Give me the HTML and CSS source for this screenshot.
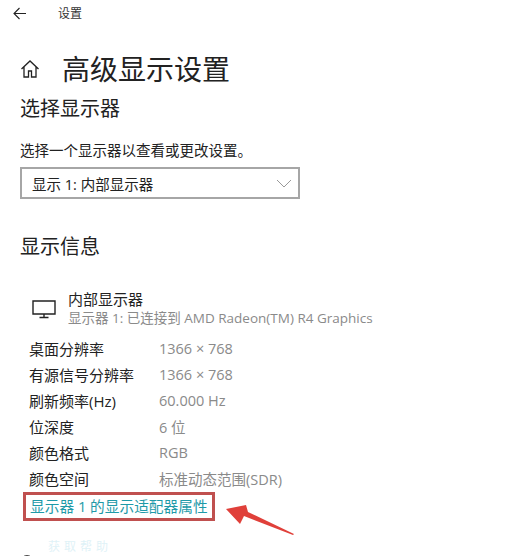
FILE: index.html
```html
<!DOCTYPE html>
<html lang="zh-CN">
<head>
    <meta charset="UTF-8">
    <title>设置</title>
    <link rel="stylesheet" href="styles.css">
</head>
<body>
    <div class="topbar">
        <svg class="back" width="14" height="13" viewBox="0 0 14 13"><path d="M6.500 1 1 6.500l5.500 5.500M1 6.500h12" fill="none" stroke="#222" stroke-width="1.100"/></svg>
        <span class="topbar-title">设置</span>
    </div>

    <div class="page-head">
        <svg class="home" width="20" height="20" viewBox="0 0 20 20"><path d="M1.500 10 10 2l8.500 8M4 8v10h4.500v-6h3v6H16V8" fill="none" stroke="#222" stroke-width="1.300"/></svg>
        <h1>高级显示设置</h1>
    </div>

    <h2 class="pick-title">选择显示器</h2>
    <p class="pick-hint">选择一个显示器以查看或更改设置。</p>
    <div class="select">
        <span>显示 1: 内部显示器</span>
        <svg width="16" height="9" viewBox="0 0 16 9"><path d="M1 1l7 7 7-7" fill="none" stroke="#999" stroke-width="1"/></svg>
    </div>

    <h2 class="info-title">显示信息</h2>

    <div class="monitor">
        <svg class="monitor-icon" width="24" height="20" viewBox="0 0 24 20"><path d="M1 2h22v13H1zM12 15v3M7.500 18.500h9" fill="none" stroke="#222" stroke-width="1.400"/></svg>
        <div>
            <div class="monitor-name">内部显示器</div>
            <div class="monitor-sub">显示器 1: 已连接到 AMD Radeon(TM) R4 Graphics</div>
        </div>
    </div>

    <div class="specs">
        <span>桌面分辨率</span><span class="val">1366 × 768</span>
        <span>有源信号分辨率</span><span class="val">1366 × 768</span>
        <span>刷新频率(Hz)</span><span class="val">60.000 Hz</span>
        <span>位深度</span><span class="val">6 位</span>
        <span>颜色格式</span><span class="val">RGB</span>
        <span>颜色空间</span><span class="val">标准动态范围(SDR)</span>
    </div>

    <div class="link-row">
        <a class="adapter-link">显示器 1 的显示适配器属性</a>
        <svg class="arrow" width="70" height="42" viewBox="0 0 70 42"><path d="M0 12 20 8l2 7 46 22-1 1-49-19-4 8z" fill="#e0403a"/></svg>
    </div>

    <div class="help">
        <span class="help-icon"></span>
        <span class="help-text">获取帮助</span>
    </div>
</body>
</html>
```

FILE: styles.css
```css
body {
    margin: 0;
    padding: 0 0 0 20px;
    height: 557px;
    overflow: hidden;
    background-color: #fff;
    color: #222;
    font-family: "Open Sans", "Noto Sans CJK SC", sans-serif;
    box-sizing: border-box;
}
h1, h2, p {
    margin: 0;
    font-weight: 400;
}
.topbar {
    display: flex;
    align-items: center;
    height: 26px;
    margin-left: -7px;
}
.back {
    margin-right: 31px;
}
.topbar-title {
    font-size: 12px;
    color: #333;
}
.page-head {
    display: flex;
    align-items: center;
    height: 40px;
    margin-top: 23px;
}
.home {
    margin-right: 22px;
}
h1 {
    font-size: 28px;
    line-height: 40px;
    color: #222;
}
.pick-title {
    font-size: 20px;
    line-height: 26px;
    margin-top: 7px;
}
.pick-hint {
    font-size: 14.5px;
    line-height: 20px;
    margin-top: 19px;
}
.select {
    display: flex;
    align-items: center;
    justify-content: space-between;
    box-sizing: border-box;
    width: 280px;
    height: 32px;
    margin-top: 6px;
    padding: 0 6px 0 10px;
    border: 2px solid #a6a6a6;
    font-size: 14.5px;
}
.info-title {
    font-size: 20px;
    line-height: 26px;
    margin-top: 35px;
}
.monitor {
    display: flex;
    align-items: center;
    margin-top: 30px;
    padding-left: 12px;
}
.monitor-icon {
    margin-right: 12px;
}
.monitor-name {
    font-size: 15px;
    line-height: 18px;
}
.monitor-sub {
    font-size: 13.5px;
    line-height: 20px;
    color: #8a8a8a;
}
.specs {
    display: grid;
    grid-template-columns: 130px auto;
    grid-auto-rows: 26px;
    align-items: center;
    margin-top: 7px;
    padding-left: 9px;
    font-size: 15px;
}
.val {
    font-size: 14.5px;
    color: #8a8a8a;
}
.link-row {
    position: relative;
    display: flex;
    align-items: flex-start;
    margin-top: 1px;
    margin-left: 3px;
}
.adapter-link {
    box-sizing: border-box;
    height: 29px;
    padding: 0 4px 0 4px;
    border: 3px solid #c0504f;
    font-size: 14.7px;
    line-height: 23px;
    color: #1f9aa8;
}
/* red annotation arrow drawn over the screenshot */
.arrow {
    position: absolute;
    left: 203px;
    top: 5px;
}
.help {
    display: flex;
    align-items: flex-start;
    gap: 14px;
    height: 18px;
    margin-top: 17px;
    overflow: hidden;
}
.help-icon {
    width: 12px;
    height: 12px;
    margin-top: 17px;
    border: 1px solid #444;
    border-radius: 50%;
}
.help-text {
    font-size: 12px;
    line-height: 18px;
    letter-spacing: 4px;
    color: #dff2f7;
}
```
